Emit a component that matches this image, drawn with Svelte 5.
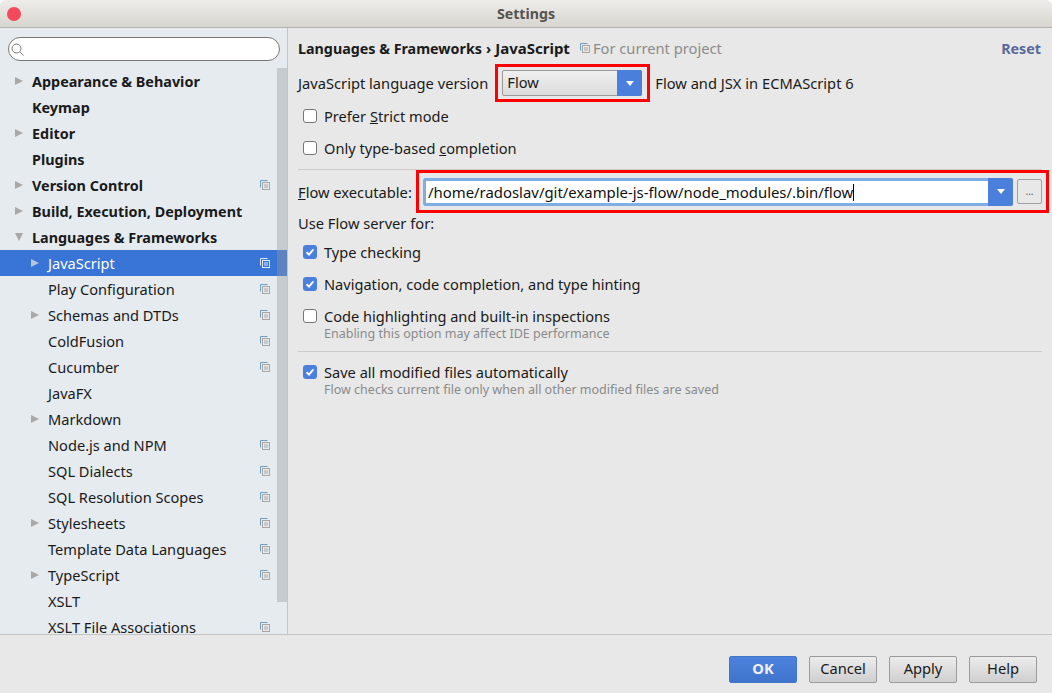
<script>
	const items = [
		{ label: 'Appearance & Behavior', bold: true, arrow: 'right' },
		{ label: 'Keymap', bold: true },
		{ label: 'Editor', bold: true, arrow: 'right' },
		{ label: 'Plugins', bold: true },
		{ label: 'Version Control', bold: true, arrow: 'right', copy: true },
		{ label: 'Build, Execution, Deployment', bold: true, arrow: 'right' },
		{ label: 'Languages & Frameworks', bold: true, arrow: 'down' },
		{ label: 'JavaScript', sub: true, arrow: 'right', copy: true, selected: true },
		{ label: 'Play Configuration', sub: true, copy: true },
		{ label: 'Schemas and DTDs', sub: true, arrow: 'right', copy: true },
		{ label: 'ColdFusion', sub: true, copy: true },
		{ label: 'Cucumber', sub: true, copy: true },
		{ label: 'JavaFX', sub: true },
		{ label: 'Markdown', sub: true, arrow: 'right' },
		{ label: 'Node.js and NPM', sub: true, copy: true },
		{ label: 'SQL Dialects', sub: true, copy: true },
		{ label: 'SQL Resolution Scopes', sub: true, copy: true },
		{ label: 'Stylesheets', sub: true, arrow: 'right', copy: true },
		{ label: 'Template Data Languages', sub: true, copy: true },
		{ label: 'TypeScript', sub: true, arrow: 'right', copy: true },
		{ label: 'XSLT', sub: true },
		{ label: 'XSLT File Associations', sub: true, copy: true }
	];
</script>

{#snippet copyIcon(project)}
	<svg class="copy" class:project width="10" height="10" viewBox="0 0 10 10" fill="none">
		<path class="back" d="M0.5 7.5V0.5H7.5" stroke-width="1" />
		<rect class="front" x="2.5" y="2.5" width="7" height="7" stroke-width="1" />
		<path class="front" d="M4 5H8M4 7H8" stroke-width="1" />
	</svg>
{/snippet}

{#snippet checkbox(on)}
	<span class="box" class:on>
		{#if on}
			<svg width="14" height="14" viewBox="0 0 14 14" fill="none">
				<path d="M3.6 7.2L6 9.6L10.4 4.4" stroke="#fff" stroke-width="2" />
			</svg>
		{/if}
	</span>
{/snippet}

<div class="window">
	<header class="titlebar">
		<span class="close"></span>
		<span class="title">Settings</span>
	</header>

	<div class="main">
		<aside class="sidebar">
			<div class="search">
				<svg width="13" height="13" viewBox="0 0 13 13" fill="none" stroke="#777" stroke-width="1">
					<circle cx="5.5" cy="5.5" r="4.5" />
					<path d="M9 9L12.5 12.5" />
				</svg>
			</div>
			<div class="tree">
				<div class="rows">
					{#each items as item}
						<div class="row" class:bold={item.bold} class:sub={item.sub} class:selected={item.selected}>
							{#if item.arrow}
								<span class="arrow {item.arrow}"></span>
							{/if}
							<span class="label">{item.label}</span>
							{#if item.copy}
								{@render copyIcon(false)}
							{/if}
						</div>
					{/each}
				</div>
				<div class="scrollbar"></div>
			</div>
		</aside>

		<section class="content">
			<div class="crumbs">
				<b>Languages &amp; Frameworks</b>
				<b class="sep">›</b>
				<b class="page">JavaScript</b>
				{@render copyIcon(true)}
				<span class="project-text">For current project</span>
				<span class="reset">Reset</span>
			</div>

			<div class="version-row">
				<span>JavaScript language version</span>
				<div class="red">
					<div class="select">
						<span class="select-text">Flow</span>
						<span class="drop"><i></i></span>
					</div>
				</div>
				<span class="version-note">Flow and JSX in ECMAScript 6</span>
			</div>

			<div class="check first">{@render checkbox(false)}<span>Prefer <u>S</u>trict mode</span></div>
			<div class="check">{@render checkbox(false)}<span>Only type-based <u>c</u>ompletion</span></div>

			<div class="rule exec-rule"></div>

			<div class="exec-row">
				<span class="exec-label"><u>F</u>low executable:</span>
				<div class="red exec-red">
					<div class="field">
						<span class="field-text">/home/radoslav/git/example-js-flow/node_modules/.bin/flow<span class="caret"></span></span>
						<span class="drop"><i></i></span>
					</div>
					<span class="more">...</span>
				</div>
			</div>

			<div class="server">Use Flow server for:</div>

			<div class="check server-first">{@render checkbox(true)}<span>Type checking</span></div>
			<div class="check">{@render checkbox(true)}<span>Navigation, code completion, and type hinting</span></div>
			<div class="check">{@render checkbox(false)}<span>Code highlighting and built-in inspections</span></div>
			<div class="hint">Enabling this option may affect IDE performance</div>

			<div class="rule save-rule"></div>

			<div class="check save">{@render checkbox(true)}<span>Save all modified files automatically</span></div>
			<div class="hint">Flow checks current file only when all other modified files are saved</div>
		</section>
	</div>

	<footer class="footer">
		<button class="primary">OK</button>
		<button>Cancel</button>
		<button>Apply</button>
		<button>Help</button>
	</footer>
</div>

<style>
	:global(body) {
		margin: 0;
		background: #fff;
	}

	.window {
		width: 1052px;
		height: 693px;
		display: flex;
		flex-direction: column;
		background: #e8e8e8;
		font-family: 'Noto Sans', sans-serif;
		font-size: 14.7px;
		color: #1a1a1a;
		overflow: hidden;
		border-radius: 6px 6px 0 0;
	}

	b {
		font-size: 14.3px;
	}

	b.page {
		font-size: 15px;
	}

	.titlebar {
		height: 28px;
		flex: none;
		display: flex;
		align-items: center;
		justify-content: center;
		position: relative;
		box-sizing: border-box;
		background: linear-gradient(#eeede9, #d6d5d0);
		border-bottom: 1px solid #b4b3ae;
	}

	.close {
		position: absolute;
		left: 7px;
		top: 7px;
		width: 14px;
		height: 14px;
		border-radius: 50%;
		background: #f4495a;
	}

	.title {
		font-weight: 700;
		font-size: 14.2px;
		color: #55544f;
	}

	.main {
		flex: 1;
		display: flex;
		min-height: 0;
		border-bottom: 1px solid #c4c4c4;
	}

	.sidebar {
		width: 288px;
		flex: none;
		box-sizing: border-box;
		background: #e6ebf0;
		border-right: 1px solid #c4c4c4;
		display: flex;
		flex-direction: column;
		min-height: 0;
	}

	.search {
		margin: 9px 7px 7px 8px;
		height: 24px;
		box-sizing: border-box;
		flex: none;
		background: #fff;
		border: 1px solid #777;
		border-radius: 12px;
		display: flex;
		align-items: center;
		padding-left: 2px;
	}

	.tree {
		flex: 1;
		display: flex;
		min-height: 0;
		overflow: hidden;
		position: relative;
	}

	.rows {
		flex: 1;
		min-width: 0;
	}

	.row {
		height: 26px;
		display: flex;
		align-items: center;
		position: relative;
		padding-left: 32px;
		padding-right: 17px;
		box-sizing: border-box;
		width: 287px;
		font-size: 14.6px;
	}

	.row.sub {
		padding-left: 48px;
	}

	.row.bold .label {
		font-weight: 700;
		font-size: 14.4px;
	}

	.row.selected {
		background: #3875d7;
		color: #fff;
	}

	.label {
		flex: 1;
	}

	.arrow {
		position: absolute;
		width: 0;
		height: 0;
		left: 15px;
	}

	.row.sub .arrow {
		left: 31px;
	}

	.arrow.right {
		border-left: 8px solid #a8a8a8;
		border-top: 4.5px solid transparent;
		border-bottom: 4.5px solid transparent;
	}

	.arrow.down {
		border-top: 8px solid #a8a8a8;
		border-left: 4.5px solid transparent;
		border-right: 4.5px solid transparent;
	}

	.selected .arrow.right {
		border-left-color: #b8c4d8;
	}

	.copy .back {
		stroke: #6f9dbb;
	}

	.copy .front {
		stroke: #a6a6a6;
	}

	.selected .copy .back,
	.selected .copy .front {
		stroke: #dfe8f5;
	}

	.copy.project {
		margin-left: 6px;
	}

	.scrollbar {
		position: absolute;
		right: 0;
		top: 0;
		width: 10px;
		height: 534px;
		background: rgba(150, 155, 160, 0.4);
	}

	.content {
		flex: 1;
		min-width: 0;
		box-sizing: border-box;
		padding: 9px 11px 0 10px;
	}

	.crumbs {
		height: 22px;
		display: flex;
		align-items: center;
		gap: 4px;
		color: #1a1a1a;
	}

	.project-text {
		color: #8c8c8c;
		margin-left: -1px;
	}

	.reset {
		margin-left: auto;
		font-weight: 700;
		font-size: 14.3px;
		color: #5a6a9c;
	}

	.version-row {
		display: flex;
		align-items: center;
		margin-top: 5px;
		height: 38px;
	}

	.red {
		border: 3px solid #f00;
		box-sizing: border-box;
	}

	.version-row .red {
		margin-left: 7px;
		width: 155px;
		height: 38px;
		padding: 3px 5px 3px 4px;
		flex: none;
	}

	.select {
		height: 26px;
		box-sizing: border-box;
		display: flex;
		border: 1px solid #9a9a9a;
		border-radius: 2px;
		background: linear-gradient(#efefef, #dcdcdc);
	}

	.select-text {
		flex: 1;
		padding-left: 4px;
		line-height: 22px;
	}

	.drop {
		width: 25px;
		flex: none;
		background: #4a7fdb;
		display: flex;
		align-items: center;
		justify-content: center;
		border-radius: 0 2px 2px 0;
	}

	.drop i {
		width: 0;
		height: 0;
		border-top: 5px solid #fff;
		border-left: 4px solid transparent;
		border-right: 4px solid transparent;
	}

	.select .drop {
		margin: -1px -1px -1px 0;
	}

	.version-note {
		margin-left: 5px;
	}

	.check {
		display: flex;
		align-items: center;
		gap: 7px;
		height: 22px;
		padding-left: 5px;
		margin-top: 10px;
		font-size: 14.6px;
	}

	.check.first {
		margin-top: 3px;
	}

	.box {
		width: 14px;
		height: 14px;
		flex: none;
		box-sizing: border-box;
		border: 1px solid #777;
		border-radius: 3px;
		background: #fff;
		display: block;
		position: relative;
	}

	.box.on {
		border: none;
		background: #4a7fdb;
	}

	.box svg {
		display: block;
	}

	.rule {
		height: 1px;
		background: #cbcbcb;
		width: 744px;
	}

	.exec-rule {
		margin-top: 10px;
	}

	.exec-row {
		display: flex;
		align-items: center;
		height: 43px;
		margin-bottom: -1px;
	}

	.exec-label {
		width: 118px;
		flex: none;
	}

	.exec-red {
		width: 633px;
		height: 43px;
		display: flex;
		align-items: center;
		padding-left: 4px;
		gap: 4px;
		margin-right: -10px;
		flex: none;
	}

	.field {
		width: 590px;
		height: 28px;
		box-sizing: border-box;
		display: flex;
		flex: none;
		border: 3px solid #7eaee4;
		border-right: none;
		border-radius: 3px;
		background: #fff;
	}

	.field .drop {
		margin: -3px 0;
	}

	.field-text {
		flex: 1;
		padding-left: 2px;
		line-height: 22px;
		font-size: 14.9px;
		color: #111;
		white-space: nowrap;
	}

	.caret {
		display: inline-block;
		width: 1px;
		height: 17px;
		background: #000;
		vertical-align: -3px;
	}

	.more {
		width: 25px;
		height: 25px;
		box-sizing: border-box;
		border: 1px solid #a0a0a0;
		border-radius: 2px;
		text-align: center;
		font-size: 10px;
		line-height: 22px;
		color: #555;
	}

	.server {
		height: 22px;
		line-height: 22px;
	}

	.check.server-first {
		margin-top: 7px;
	}

	.hint {
		font-size: 12.5px;
		color: #8a8a8a;
		line-height: 16px;
		padding-left: 26px;
		margin-top: -1px;
	}

	.save-rule {
		margin-top: 9px;
	}

	.check.save {
		margin-top: 9px;
	}

	.footer {
		height: 58px;
		flex: none;
		display: flex;
		justify-content: flex-end;
		gap: 12px;
		padding: 21px 15px 0 0;
		box-sizing: border-box;
	}

	button {
		width: 68px;
		height: 27px;
		padding: 0 0 3px;
		box-sizing: border-box;
		font: inherit;
		color: #1a1a1a;
		border: 1px solid #9a9a9a;
		border-radius: 2px;
		background: linear-gradient(#ececec, #cfcfcf);
	}

	button.primary {
		color: #f0f0f0;
		font-weight: 700;
		border-color: #4476c8;
		background: linear-gradient(#4c82de, #3f74cc);
	}
</style>
